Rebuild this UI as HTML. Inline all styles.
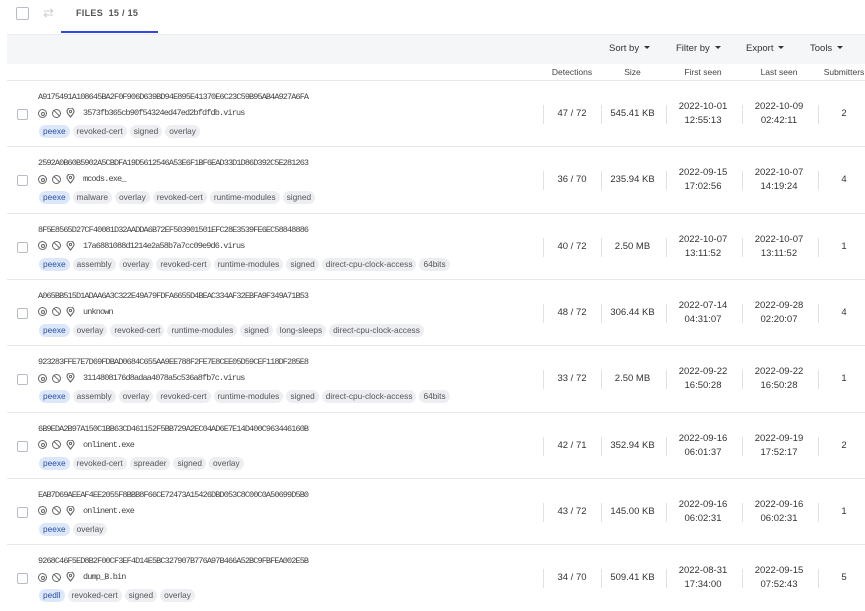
<!DOCTYPE html><html><head><meta charset="utf-8"><style>
*{margin:0;padding:0;box-sizing:border-box}
body{width:865px;height:605px;overflow:hidden;background:#fff;font-family:"Liberation Sans",sans-serif;color:#333;position:relative}
.a{position:absolute}
.cb{position:absolute;width:11px;height:11px;border:1px solid #b8bcc6;border-radius:2px;background:#fff}
.row{position:absolute;left:7px;width:858px;height:66px;border-top:1px solid #e6e8ec}
.hash{position:absolute;left:31px;top:11px;font-family:"Liberation Mono",monospace;font-size:8.5px;color:#444;letter-spacing:-0.88px}
.nm{position:absolute;left:31px;top:27px;font-size:8.5px;color:#444;display:flex;align-items:center;gap:5px}
.nm span.f{font-family:"Liberation Mono",monospace;font-size:8.5px;letter-spacing:-0.85px;margin-left:3px}
.ic{width:9px;height:9px;border:1.3px solid #666;border-radius:50%;position:relative}
.ic.g:after{content:"";position:absolute;left:2px;top:2px;width:2px;height:2px;border:1px solid #666;border-radius:50%}
.ic.n:after{content:"";position:absolute;left:3px;top:-1px;width:1px;height:8px;background:#666;transform:rotate(-45deg)}
.tags{position:absolute;left:32px;top:44px;display:flex;gap:3px}
.t{background:#eceef2;color:#555;font-size:8.3px;padding:2px 4px;border-radius:7px;line-height:9px}
.t.b{background:#dce8fa;color:#2a4fa0}
.c{position:absolute;top:0;height:66px;display:flex;align-items:center;justify-content:center;text-align:center;font-size:9.5px;color:#333;line-height:14px}
.sep{position:absolute;top:24px;height:19px;border-left:1px solid #dfe1e5}
.h{position:absolute;top:67px;font-size:8.5px;color:#444;text-align:center}
.m{position:absolute;top:43px;font-size:9.5px;color:#333}
.m:after{content:"";display:inline-block;margin-left:5px;border-left:3px solid transparent;border-right:3px solid transparent;border-top:3px solid #333;vertical-align:2px}
</style></head><body>
<div class="cb" style="left:16px;top:7px;width:13px;height:13px"></div>
<div class="a" style="left:43px;top:5px;color:#ccc;font-size:13px">⇄</div>
<div class="a" style="left:76px;top:8px;font-size:9px;font-weight:bold;color:#555;letter-spacing:.3px">FILES&nbsp; 15 / 15</div>
<div class="a" style="left:61px;top:31px;width:97px;height:2px;background:#2f48e0"></div>
<div class="a" style="left:7px;top:34px;width:858px;height:30px;background:#f5f6f8;border-top:1px solid #ebedf0"></div>
<div class="m" style="left:609px">Sort by</div>
<div class="m" style="left:676px">Filter by</div>
<div class="m" style="left:746px">Export</div>
<div class="m" style="left:810px">Tools</div>
<div class="h" style="left:543px;width:58px">Detections</div>
<div class="h" style="left:601px;width:63px">Size</div>
<div class="h" style="left:666px;width:74px">First seen</div>
<div class="h" style="left:742px;width:74px">Last seen</div>
<div class="h" style="left:818px;width:52px">Submitters</div>
<div id="rows"></div>
<script>
var R=[
["A9175491A108645BA2F0F906D639BD94E895E41370E6C23C59B95AB4A927A6FA","3573fb365cb90f54324ed47ed2bfdfdb.virus",["peexe","revoked-cert","signed","overlay"],"47 / 72","545.41 KB","2022-10-01<br>12:55:13","2022-10-09<br>02:42:11","2"],
["2592A0B60B5902A5CBDFA19D5612546A53E6F1BF6EAD33D1D86D392C5E281263","mcods.exe_",["peexe","malware","overlay","revoked-cert","runtime-modules","signed"],"36 / 70","235.94 KB","2022-09-15<br>17:02:56","2022-10-07<br>14:19:24","4"],
["8F5E8565D27CF40081D32AADDA6B72EF503901501EFC28E3539FE6EC58848886","17a6881088d1214e2a58b7a7cc09e9d6.virus",["peexe","assembly","overlay","revoked-cert","runtime-modules","signed","direct-cpu-clock-access","64bits"],"40 / 72","2.50 MB","2022-10-07<br>13:11:52","2022-10-07<br>13:11:52","1"],
["A065BB515D1ADAA6A3C322E49A79FDFA6655D4BEAC334AF32EBFA9F349A71B53","unknown",["peexe","overlay","revoked-cert","runtime-modules","signed","long-sleeps","direct-cpu-clock-access"],"48 / 72","306.44 KB","2022-07-14<br>04:31:07","2022-09-28<br>02:20:07","4"],
["923283FFE7E7D69FDBAD0684C655AA9EE788F2FE7E8CEE05D59CEF118DF285E8","3114808176d8adaa4078a5c536a8fb7c.virus",["peexe","assembly","overlay","revoked-cert","runtime-modules","signed","direct-cpu-clock-access","64bits"],"33 / 72","2.50 MB","2022-09-22<br>16:50:28","2022-09-22<br>16:50:28","1"],
["6B9EDA2B97A150C1BB63CD461152F5BB729A2EC04AD6E7E14D400C963446160B","onlinent.exe",["peexe","revoked-cert","spreader","signed","overlay"],"42 / 71","352.94 KB","2022-09-16<br>06:01:37","2022-09-19<br>17:52:17","2"],
["EAB7D69AEEAF4EE2055F8BBB8F66CE72473A15426DBD053C8C00C0A50699D5B0","onlinent.exe",["peexe","overlay"],"43 / 72","145.00 KB","2022-09-16<br>06:02:31","2022-09-16<br>06:02:31","1"],
["9268C46F5ED8B2F00CF3EF4D14E5BC327907B776A97B466A52BC9FBFEA002E5B","dump_B.bin",["pedll","revoked-cert","signed","overlay"],"34 / 70","509.41 KB","2022-08-31<br>17:34:00","2022-09-15<br>07:52:43","5"]];
var h="";R.forEach(function(r,i){var top=80+66.3*i;
h+='<div class="row" style="top:'+top+'px"><div class="cb" style="left:10px;top:28px"></div><div class="hash">'+r[0]+'</div><div class="nm"><div class="ic g"></div><div class="ic n"></div><svg width="9" height="10" viewBox="0 0 9 10"><path d="M4.5 9C2.5 6.5 1 5 1 3.5a3.5 3.5 0 0 1 7 0C8 5 6.5 6.5 4.5 9z" fill="none" stroke="#666" stroke-width="1.1"/><circle cx="4.5" cy="3.5" r="1.1" fill="none" stroke="#666"/></svg><span class="f">'+r[1]+'</span></div><div class="tags">';
r[2].forEach(function(t,j){h+='<span class="t'+(j==0?' b':'')+'">'+t+'</span>'});
h+='</div>';
var cols=[[536,58],[594,63],[659,74],[735,74],[811,52]];
cols.forEach(function(c,k){h+='<div class="sep" style="left:'+c[0]+'px"></div><div class="c" style="left:'+c[0]+'px;width:'+c[1]+'px">'+r[3+k]+'</div>'});
h+='</div>'});
document.getElementById("rows").innerHTML=h;
</script>
</body></html>
